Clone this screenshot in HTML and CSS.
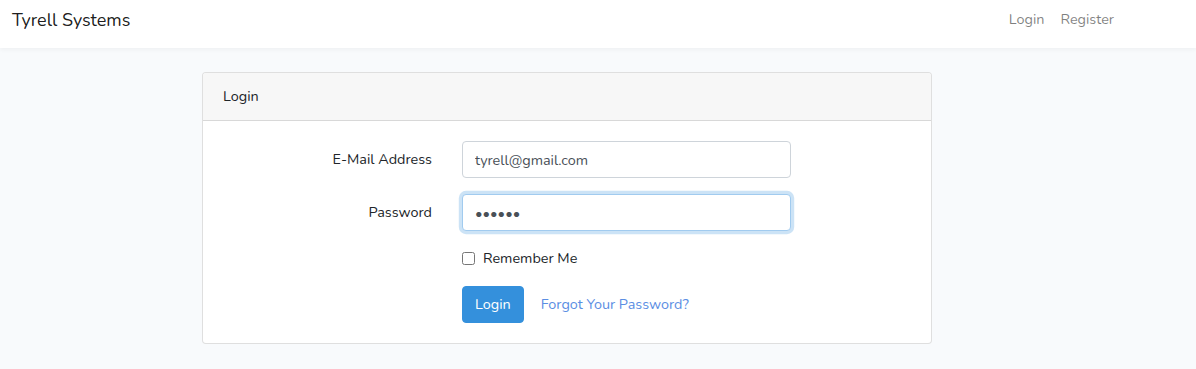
FILE: index.html
```html
<!DOCTYPE html>
<html lang="en">
<head>
<meta charset="utf-8">
<title>Tyrell Systems</title>
<link rel="stylesheet" href="styles.css">
</head>
<body>
<nav class="navbar">
  <div class="navbar-inner">
    <a class="brand" href="#">Tyrell Systems</a>
    <ul class="nav">
      <li><a class="nav-link" href="#">Login</a></li>
      <li><a class="nav-link" href="#">Register</a></li>
    </ul>
  </div>
</nav>
<main class="main">
  <div class="card">
    <div class="card-header">Login</div>
    <div class="card-body">
      <form class="form">
        <label class="col-label" for="email">E-Mail Address</label>
        <input class="form-control" id="email" type="email" value="tyrell@gmail.com">
        <label class="col-label" for="password">Password</label>
        <input class="form-control focused" id="password" type="password" value="secret">
        <div class="form-check">
          <input class="check-input" type="checkbox" id="remember">
          <label class="check-label" for="remember">Remember Me</label>
        </div>
        <div class="actions">
          <button type="button" class="btn btn-primary">Login</button>
          <a class="btn btn-link" href="#">Forgot Your Password?</a>
        </div>
      </form>
    </div>
  </div>
</main>
</body>
</html>
```
FILE: styles.css
```css
* { box-sizing: border-box; }
html, body { margin: 0; padding: 0; }
body {
  background: #f8fafc;
  font-family: "Nunito", "Lato", "Noto Sans", sans-serif;
  font-size: 14.4px;
  line-height: 1.6;
  color: #212529;
}
.navbar {
  background: #fff;
  height: 48px;
  box-shadow: 0 2px 4px rgba(0,0,0,.04);
}
.navbar-inner {
  width: 1110px;
  margin-left: 12px;
  height: 40px;
  display: flex;
  align-items: center;
  justify-content: space-between;
}
.brand {
  font-size: 18px;
  color: rgba(0,0,0,.9);
  text-decoration: none;
  line-height: 1.6;
}
.nav {
  list-style: none;
  margin: 0;
  padding: 0;
  display: flex;
}
.nav-link {
  display: block;
  padding: 8px;
  color: rgba(0,0,0,.5);
  text-decoration: none;
}
.main { padding-top: 24px; }
.card {
  width: 730px;
  margin-left: 202px;
  background: #fff;
  border: 1px solid rgba(0,0,0,.125);
  border-radius: 4px;
}
.card-header {
  padding: 12px 20px;
  background: #f7f7f7;
  border-bottom: 1px solid rgba(0,0,0,.125);
  border-radius: 3px 3px 0 0;
}
.card-body { padding: 20px; }
.form {
  display: grid;
  grid-template-columns: 209px 329px;
  column-gap: 30px;
  row-gap: 16px;
}
.col-label {
  grid-column: 1;
  text-align: right;
  padding-top: 7px;
}
.form-control {
  grid-column: 2;
  height: 37px;
  padding: 6px 12px;
  border: 1px solid #ced4da;
  border-radius: 4px;
  font: inherit;
  color: #495057;
  background: #fff;
  outline: none;
}
.form-control.focused {
  border-color: #a1cbef;
  box-shadow: 0 0 0 3.2px rgba(52,144,220,.25);
}
.form-check {
  grid-column: 2;
  display: flex;
  align-items: center;
  gap: 8px;
  height: 23px;
}
.check-input {
  margin: 0;
  width: 13px;
  height: 13px;
}
.actions {
  grid-column: 2;
  display: flex;
  align-items: center;
  gap: 4px;
}
.btn {
  display: inline-block;
  height: 37px;
  padding: 6px 12px;
  border: 1px solid transparent;
  border-radius: 4px;
  font: inherit;
  text-decoration: none;
}
.btn-primary {
  background: #3490dc;
  border-color: #3490dc;
  color: #fff;
}
.btn-link {
  color: #5b8ee3;
}
```
